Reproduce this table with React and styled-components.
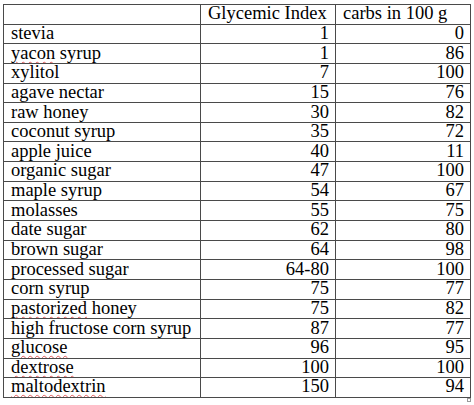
import React from "react";
import styled, { createGlobalStyle } from "styled-components";

const GlobalStyle = createGlobalStyle`
  html, body {
    margin: 0;
    padding: 0;
    background: #ffffff;
  }
  body {
    font-family: "Liberation Serif", "DejaVu Serif", serif;
    color: #000000;
  }
`;

const Page = styled.div`
  position: relative;
  width: 474px;
  height: 405px;
  padding: 4px 0 0 3px;
  box-sizing: border-box;
`;

const Table = styled.table`
  border-collapse: collapse;
  width: 467px;
  table-layout: fixed;
  font-size: 18.5px;
`;

const Row = styled.tr`
  height: 19.65px;
`;

const Cell = styled.td`
  border: 1px solid #4a4a4a;
  padding: 0 6px 1px 7px;
  line-height: 17px;
  white-space: nowrap;
  overflow: hidden;
  text-align: ${(p) => (p.$num ? "right" : "left")};
  vertical-align: middle;
`;

const HeadCell = styled(Cell)`
  text-align: left;
`;

const Misspelled = styled.span`
  text-decoration: underline wavy #e05a5a;
  text-decoration-thickness: 1px;
  text-underline-offset: 2px;
`;

const Handle = styled.div`
  position: absolute;
  left: 467px;
  top: 398px;
  width: 4px;
  height: 4px;
  border: 1px solid #9a9a9a;
  box-sizing: border-box;
`;

const rows = [
  ["stevia", "1", "0"],
  ["yacon syrup", "1", "86", "yacon"],
  ["xylitol", "7", "100"],
  ["agave nectar", "15", "76"],
  ["raw honey", "30", "82"],
  ["coconut syrup", "35", "72"],
  ["apple juice", "40", "11"],
  ["organic sugar", "47", "100"],
  ["maple syrup", "54", "67"],
  ["molasses", "55", "75"],
  ["date sugar", "62", "80"],
  ["brown sugar", "64", "98"],
  ["processed sugar", "64-80", "100"],
  ["corn syrup", "75", "77"],
  ["pastorized honey", "75", "82", "pastorized"],
  ["high fructose corn syrup", "87", "77"],
  ["glucose", "96", "95", "glucose"],
  ["dextrose", "100", "100", "dextrose"],
  ["maltodextrin", "150", "94", "maltodextrin"],
];

function Name({ text, bad }) {
  if (!bad) return text;
  const rest = text.slice(bad.length);
  return (
    <>
      <Misspelled>{bad}</Misspelled>
      {rest}
    </>
  );
}

export default function App() {
  return (
    <Page>
      <GlobalStyle />
      <Table>
        <colgroup>
          <col style={{ width: 197 }} />
          <col style={{ width: 135 }} />
          <col style={{ width: 135 }} />
        </colgroup>
        <tbody>
          <Row>
            <HeadCell />
            <HeadCell>Glycemic Index</HeadCell>
            <HeadCell>carbs in 100 g</HeadCell>
          </Row>
          {rows.map(([name, gi, carbs, bad]) => (
            <Row key={name}>
              <Cell>
                <Name text={name} bad={bad} />
              </Cell>
              <Cell $num>{gi}</Cell>
              <Cell $num>{carbs}</Cell>
            </Row>
          ))}
        </tbody>
      </Table>
      <Handle />
    </Page>
  );
}
